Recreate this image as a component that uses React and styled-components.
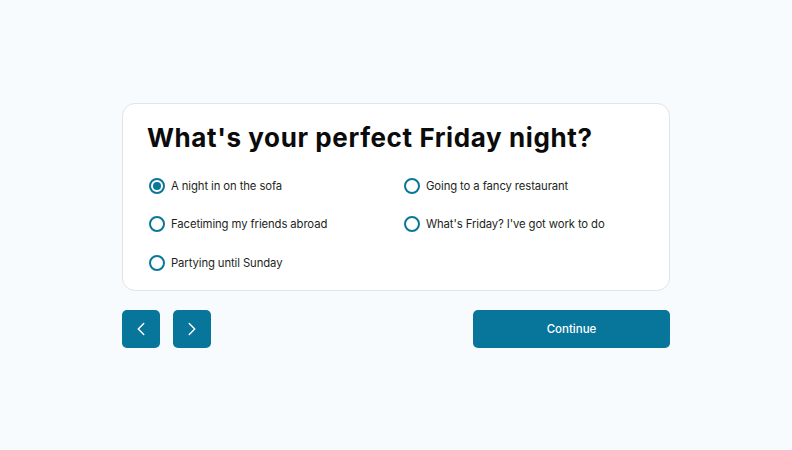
import React, { useState } from "react";
import styled, { createGlobalStyle } from "styled-components";
import { ChevronLeft, ChevronRight } from "lucide-react";

const GlobalStyle = createGlobalStyle`
  html, body {
    margin: 0;
    padding: 0;
    background: #f7fbfd;
    font-family: Inter, "Noto Sans", sans-serif;
  }
`;

const Page = styled.div`
  min-height: 100vh;
  display: flex;
  align-items: center;
  justify-content: center;
`;

const Wrapper = styled.div`
  width: 548px;
  display: flex;
  flex-direction: column;
  gap: 19px;
`;

const Card = styled.div`
  background: #ffffff;
  border: 1px solid #dde4ea;
  border-radius: 13px;
  padding: 18px 26px 17px;
`;

const Title = styled.h1`
  margin: 0 0 0 -2px;
  font-size: 26px;
  line-height: 32px;
  font-weight: 700;
  color: #0b0b0c;
  letter-spacing: 0.6px;
`;

const Options = styled.div`
  margin-top: 22px;
  display: grid;
  grid-template-columns: 255px 1fr;
  grid-auto-flow: column;
  grid-template-rows: repeat(3, 20px);
  row-gap: 18.5px;
`;

const Option = styled.label`
  display: flex;
  align-items: center;
  gap: 6px;
  font-size: 11.3px;
  letter-spacing: -0.1px;
  color: #1d1f22;
  cursor: pointer;
`;

const Radio = styled.span`
  box-sizing: border-box;
  width: 16px;
  height: 16px;
  border-radius: 50%;
  border: 2px solid #0a7698;
  display: flex;
  align-items: center;
  justify-content: center;

  &::after {
    content: "";
    width: 8px;
    height: 8px;
    border-radius: 50%;
    background: #0a7698;
    opacity: ${(props) => (props.checked ? 1 : 0)};
  }
`;

const Footer = styled.div`
  display: flex;
  align-items: center;
  gap: 13px;
`;

const IconButton = styled.button`
  width: 38px;
  height: 38px;
  border: none;
  border-radius: 5px;
  background: #08759a;
  color: #ffffff;
  display: flex;
  align-items: center;
  justify-content: center;
  padding: 0;
  cursor: pointer;
`;

const ContinueButton = styled.button`
  margin-left: auto;
  width: 197px;
  height: 38px;
  border: none;
  border-radius: 5px;
  background: #08759a;
  color: #ffffff;
  font-family: Inter, sans-serif;
  font-size: 11.5px;
  font-weight: 500;
  cursor: pointer;
`;

const options = [
  "A night in on the sofa",
  "Facetiming my friends abroad",
  "Partying until Sunday",
  "Going to a fancy restaurant",
  "What's Friday? I've got work to do",
];

export default function App() {
  const [selected, setSelected] = useState(0);

  return (
    <Page>
      <GlobalStyle />
      <Wrapper>
        <Card>
          <Title>What's your perfect Friday night?</Title>
          <Options>
            {options.map((text, i) => (
              <Option key={text} onClick={() => setSelected(i)}>
                <Radio checked={selected === i} />
                {text}
              </Option>
            ))}
          </Options>
        </Card>
        <Footer>
          <IconButton aria-label="Previous">
            <ChevronLeft size={22} strokeWidth={1.6} />
          </IconButton>
          <IconButton aria-label="Next">
            <ChevronRight size={22} strokeWidth={1.6} />
          </IconButton>
          <ContinueButton>Continue</ContinueButton>
        </Footer>
      </Wrapper>
    </Page>
  );
}
